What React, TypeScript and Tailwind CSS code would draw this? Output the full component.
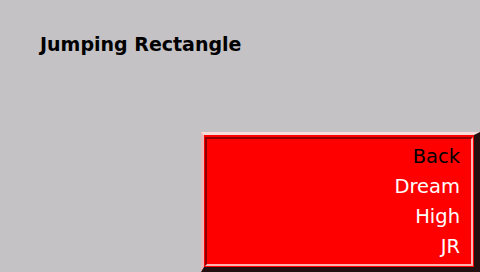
import React from "react";

export default function App() {
  const items = ["Back", "Dream", "High", "JR"];
  return (
    <div className="w-[480px] h-[272px] bg-[#c4c2c5] flex flex-col overflow-hidden" style={{ fontFamily: '"DejaVu Sans", sans-serif' }}>
      <div className="pl-[40px] pt-[35px] text-[19px] leading-[19px] font-bold text-black tracking-[0px]">
        Jumping Rectangle
      </div>
      <div className="mt-auto self-end w-[279px] h-[140px] border-t-[3px] border-l-[3px] border-r-[6px] border-b-[5px] border-t-[#f8dcdc] border-l-[#eab8b8] border-r-[#241010] border-b-[#241010] bg-[#ff0000] pt-[2px] pl-[1px] pr-[1px] pb-[1px] flex">
        <div className="flex-1 border-t-2 border-l-2 border-b-2 border-r-2 border-t-[#900000] border-l-[#900000] border-b-[#ffb4b4] border-r-[#ffb4b4] pt-[3px] pr-[11px] flex flex-col items-end">
          {items.map((t, i) => (
            <div key={t} className={`text-[19.5px] leading-[30px] ${i === 0 ? "text-black" : "text-white"}`}>
              {t}
            </div>
          ))}
        </div>
      </div>
    </div>
  );
}
